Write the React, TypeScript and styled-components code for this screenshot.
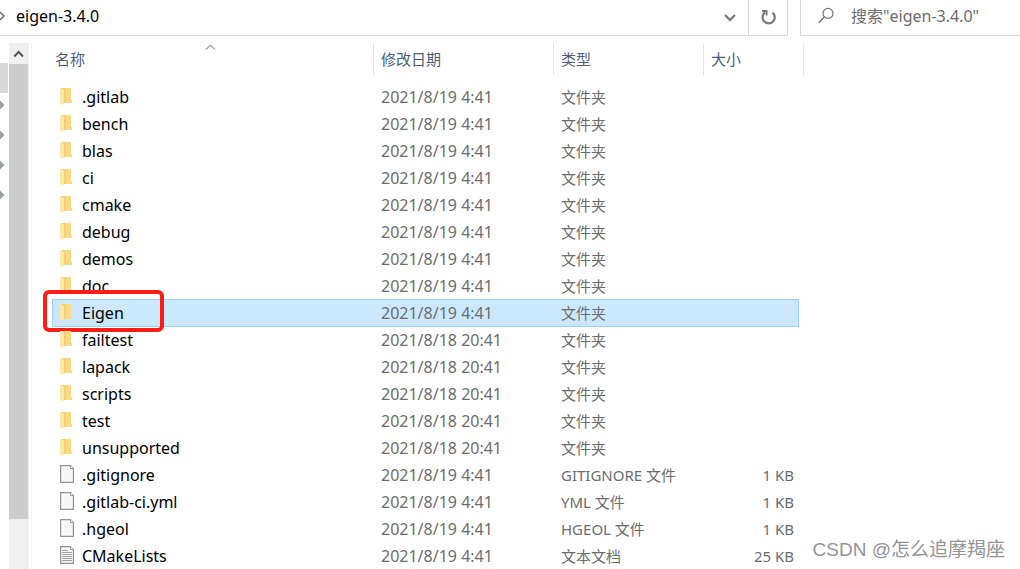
import React from "react";
import styled, { createGlobalStyle } from "styled-components";

const Global = createGlobalStyle`
  *, *::before, *::after { box-sizing: border-box; }
  body { margin: 0; background: #fff; }
  button, input { font: inherit; color: inherit; border: 0; padding: 0; background: none; }
`;

const Explorer = styled.div`
  display: flex;
  flex-direction: column;
  height: 100vh;
  overflow: hidden;
  position: relative;
  color: #6d6d6d;
  font: 15px/20px "Noto Sans", "Noto Sans CJK SC", sans-serif;
`;

const TopBar = styled.header`
  display: flex;
  flex: none;
  height: 36px;
  gap: 12px;
  font-size: 16px;
`;

const AddressBar = styled.nav`
  flex: 1;
  display: flex;
  align-items: stretch;
  border: solid #d9d9d9;
  border-width: 0 1px 1px 0;
`;

const Crumb = styled.a`
  flex: 1;
  display: flex;
  align-items: center;
  gap: 10px;
  padding-bottom: 4px;
  color: #000;
  text-decoration: none;
`;

const BarButton = styled.button<{ $divided?: boolean }>`
  display: flex;
  align-items: center;
  justify-content: center;
  width: 39px;
  border-left: ${(p) => (p.$divided ? "1px solid #d9d9d9" : "0")};
`;

const SearchBox = styled.label`
  display: flex;
  align-items: center;
  gap: 16px;
  width: 220px;
  padding: 0 0 4px 17px;
  border: solid #d9d9d9;
  border-width: 0 0 1px 1px;
`;

const SearchInput = styled.input`
  flex: 1;
  min-width: 0;
  outline: 0;
  &::placeholder { color: #6d6d6d; opacity: 1; }
`;

const Body = styled.div`
  flex: 1;
  min-height: 0;
  display: flex;
  padding-top: 7px;
`;

const Tree = styled.div`
  width: 9px;
  flex: none;
  padding-top: 20px;
`;

const TreeSelection = styled.div`
  width: 8px;
  height: 30px;
  margin-bottom: -3px;
  background: #d9d9d9;
`;

const TreeArrow = styled.button`
  display: flex;
  align-items: center;
  width: 8px;
  height: 30px;
`;

const ScrollBar = styled.div`
  flex: none;
  display: flex;
  flex-direction: column;
  width: 20px;
  background: #f0f0f0;
`;

const ScrollButton = styled.button`
  display: flex;
  align-items: center;
  justify-content: center;
  height: 21px;
`;

const ScrollThumb = styled.div`
  height: 455px;
  margin-right: 1px;
  background: #cdcdcd;
`;

const ListPane = styled.main`
  flex: 1;
  min-width: 0;
  overflow: hidden;
  margin-left: 2px;
  padding-left: 20px;
  border-left: 1px solid #f3f3f3;
`;

const FileTable = styled.table`
  table-layout: fixed;
  width: 752px;
  border-spacing: 0;
  isolation: isolate;
`;

const HeadCell = styled.th`
  position: relative;
  height: 32px;
  padding: 0;
  border-right: 1px solid #e5e5e5;
  font-weight: 400;
  color: #4c607a;
  text-align: left;
`;

const HeadButton = styled.button<{ $first?: boolean }>`
  width: 100%;
  padding-left: ${(p) => (p.$first ? 3 : 7)}px;
  text-align: left;
`;

const SortMark = styled.svg`
  position: absolute;
  left: 50%;
  top: 1px;
  margin-left: -8px;
`;

const Spacer = styled.tr`
  height: 9px;
`;

const Row = styled.tr`
  height: 27px;
`;

const Cell = styled.td<{ $right?: boolean; $large?: boolean }>`
  padding: 0 ${(p) => (p.$right ? 10 : 0)}px 2px 7px;
  font-size: ${(p) => (p.$large ? 16 : 15)}px;
  text-align: ${(p) => (p.$right ? "right" : "left")};
  white-space: nowrap;
`;

const NameCell = styled.td`
  position: relative;
  padding: 0 0 0 7px;
  color: #000;
  font-size: 16px;
`;

const NameLayout = styled.div`
  display: flex;
  align-items: center;
  gap: 7px;
  height: 27px;
  padding-bottom: 2px;
`;

const SelectionBar = styled.div`
  position: absolute;
  z-index: -1;
  left: 0;
  top: -1px;
  width: 747px;
  height: 28px;
  background: #cce8ff;
  border: 1px solid #99d1ff;
`;

const Highlight = styled.div`
  position: absolute;
  left: -9px;
  top: -10px;
  width: 121px;
  height: 42px;
  border: 4px solid #fd1d14;
  border-radius: 6px;
`;

const Watermark = styled.div`
  position: absolute;
  right: 15px;
  bottom: 6px;
  font: 19px/26px "Liberation Sans", "Noto Sans CJK SC", sans-serif;
  color: #959595;
`;

const FolderIcon = () => (
  <svg width="16" height="20" viewBox="0 0 16 20" aria-hidden="true">
    <path d="M2 1H12V13H13V16H4Z" fill="#f3d078" />
    <path d="M7 1H12V13H13V16H7Z" fill="#fadb84" />
    <path d="M1 1H2L5 3V16L3.6 18L1 16.5Z" fill="#ffe9a8" />
  </svg>
);

const FileIcon = ({ lines }: { lines?: boolean }) => (
  <svg width="16" height="20" viewBox="0 0 16 20" aria-hidden="true">
    <path d="M1.6 .6H11.5L14.4 3.5V17.4H1.6Z" fill="#f6f7f9" stroke="#949494" strokeWidth="1.2" />
    <path d="M11.5 .6V3.5H14.4" fill="#fff" stroke="#949494" />
    {lines && <path d="M3 4.5H9M3 6.5H13M3 8.5H13M3 10.5H13M3 12.5H13M3 14.5H13" stroke="#a0a0a0" />}
  </svg>
);

type Kind = "folder" | "file" | "text";
type Entry = { name: string; date: string; type: string; size?: string; kind: Kind };

const MORNING = "2021/8/19 4:41";
const EVENING = "2021/8/18 20:41";
const folder = (date: string) => (name: string): Entry => ({ name, date, type: "文件夹", kind: "folder" });

const entries: Entry[] = [
  ...[".gitlab", "bench", "blas", "ci", "cmake", "debug", "demos", "doc", "Eigen"].map(folder(MORNING)),
  ...["failtest", "lapack", "scripts", "test", "unsupported"].map(folder(EVENING)),
  { name: ".gitignore", date: MORNING, type: "GITIGNORE 文件", size: "1 KB", kind: "file" },
  { name: ".gitlab-ci.yml", date: MORNING, type: "YML 文件", size: "1 KB", kind: "file" },
  { name: ".hgeol", date: MORNING, type: "HGEOL 文件", size: "1 KB", kind: "file" },
  { name: "CMakeLists", date: MORNING, type: "文本文档", size: "25 KB", kind: "text" },
];

export default function App() {
  const selected = "Eigen";
  return (
    <>
      <Global />
      <Explorer>
        <TopBar>
          <AddressBar aria-label="地址">
            <Crumb href="#">
              <svg width="6" height="12" viewBox="0 0 6 12" aria-hidden="true">
                <path d="M0 2L4 6L0 10" fill="none" stroke="#777" strokeWidth="1.6" />
              </svg>
              eigen-3.4.0
            </Crumb>
            <BarButton aria-label="展开">
              <svg width="14" height="10" viewBox="0 0 14 10">
                <path d="M3 2L8 7L13 2" fill="none" stroke="#777" strokeWidth="2.2" />
              </svg>
            </BarButton>
            <BarButton $divided aria-label="刷新">
              <svg width="18" height="18" viewBox="0 0 18 18">
                <path d="M13.6 3.6A6.1 6.1 0 1 1 6 3.4" fill="none" stroke="#777" strokeWidth="2.2" />
                <path d="M3 2H7.6V6.6" fill="none" stroke="#777" strokeWidth="1.8" />
              </svg>
            </BarButton>
          </AddressBar>
          <SearchBox>
            <svg width="17" height="17" viewBox="0 0 17 17" aria-hidden="true">
              <circle cx="10" cy="6.4" r="5" fill="none" stroke="#777" strokeWidth="1.2" />
              <path d="M6.4 10L.8 15.8" stroke="#777" strokeWidth="1.4" />
            </svg>
            <SearchInput aria-label="搜索" placeholder={'搜索"eigen-3.4.0"'} />
          </SearchBox>
        </TopBar>
        <Body>
          <Tree>
            <TreeSelection />
            {[1, 2, 3, 4].map((n) => (
              <TreeArrow key={n} aria-label="展开文件夹">
                <svg width="5" height="10" viewBox="0 0 5 10">
                  <path d="M0 0.5L4.5 5L0 9.5Z" fill="#98a1a8" />
                </svg>
              </TreeArrow>
            ))}
          </Tree>
          <ScrollBar>
            <ScrollButton aria-label="向上滚动">
              <svg width="12" height="10" viewBox="0 0 12 10">
                <path d="M1.2 7.5L5.6 3L10 7.5" fill="none" stroke="#555" strokeWidth="2" />
              </svg>
            </ScrollButton>
            <ScrollThumb />
          </ScrollBar>
          <ListPane>
            <FileTable>
              <colgroup>
                <col style={{ width: 322 }} />
                <col style={{ width: 180 }} />
                <col style={{ width: 150 }} />
                <col style={{ width: 100 }} />
              </colgroup>
              <thead>
                <tr>
                  {["名称", "修改日期", "类型", "大小"].map((label, i) => (
                    <HeadCell key={label} scope="col">
                      <HeadButton $first={i === 0}>{label}</HeadButton>
                      {i === 0 && (
                        <SortMark width="11" height="6" viewBox="0 0 11 6" aria-hidden="true">
                          <path d="M1 5.5L5.5 1L10 5.5" fill="none" stroke="#666" />
                        </SortMark>
                      )}
                    </HeadCell>
                  ))}
                </tr>
              </thead>
              <tbody>
                <Spacer aria-hidden="true" />
                {entries.map((e) => (
                  <Row key={e.name} aria-selected={e.name === selected}>
                    <NameCell>
                      {e.name === selected && <SelectionBar />}
                      <NameLayout>
                        {e.kind === "folder" ? <FolderIcon /> : <FileIcon lines={e.kind === "text"} />}
                        {e.name}
                      </NameLayout>
                      {e.name === selected && <Highlight />}
                    </NameCell>
                    <Cell $large>{e.date}</Cell>
                    <Cell>{e.type}</Cell>
                    <Cell $right>{e.size}</Cell>
                  </Row>
                ))}
              </tbody>
            </FileTable>
          </ListPane>
        </Body>
        <Watermark>CSDN @怎么追摩羯座</Watermark>
      </Explorer>
    </>
  );
}
